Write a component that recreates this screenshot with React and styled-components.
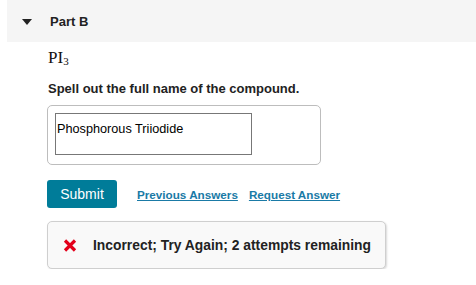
import React from 'react';
import styled, { createGlobalStyle } from 'styled-components';

const GlobalStyle = createGlobalStyle`
    body {
        margin: 0;
        background: #fff;
        font-family: "Liberation Sans", Arial, sans-serif;
    }
`

const PartHeader = styled.div`
    margin-left: 7px;
    height: 42px;
    background: #f5f5f5;
    display: flex;
    align-items: center;
    padding-left: 15px;
`

const Caret = styled.span`
    width: 0;
    height: 0;
    border-left: 5px solid transparent;
    border-right: 5px solid transparent;
    border-top: 6px solid #222;
    margin-right: 18px;
    margin-top: 1px;
`

const PartTitle = styled.span`
    font-weight: bold;
    font-size: 13px;
    color: #222;
`

const Body = styled.div`
    padding-left: 47px;
`

const Formula = styled.div`
    font-family: "Liberation Serif", "Times New Roman", serif;
    font-size: 17px;
    color: #111;
    margin-top: 6px;
    padding-left: 1px;
    line-height: 20px;

    sub {
        font-size: 11px;
        vertical-align: -2px;
    }
`

const Prompt = styled.p`
    margin: 10px 0 0 1px;
    font-weight: bold;
    font-size: 13px;
    color: #222;
    line-height: 16px;
`

const AnswerBox = styled.div`
    margin-top: 8px;
    width: 274px;
    height: 60px;
    border: 1px solid #bdbdbd;
    border-radius: 5px;
    box-sizing: border-box;
    padding: 7px 0 0 7px;
`

const AnswerInput = styled.div`
    width: 197px;
    height: 42px;
    border: 1px solid #777;
    box-sizing: border-box;
    font-size: 12.7px;
    color: #000;
    padding: 8px 0 0 1px;
`

const Actions = styled.div`
    margin-top: 15px;
    display: flex;
    align-items: center;
    gap: 11px;
`

const SubmitButton = styled.button`
    width: 70px;
    height: 28px;
    border: none;
    border-radius: 3px;
    background: #007c99;
    color: #fff;
    font-family: "Liberation Sans", Arial, sans-serif;
    font-size: 14px;
    padding: 0;
    margin-right: 9px;
`

const TextLink = styled.a`
    font-size: 11.7px;
    font-weight: bold;
    color: #1a7aa6;
    text-decoration: underline;
    cursor: pointer;
`

const Feedback = styled.div`
    margin-top: 13px;
    width: 339px;
    height: 48px;
    box-sizing: border-box;
    border: 1px solid #cfcfcf;
    border-radius: 5px;
    background: #f9f9f9;
    box-shadow: 1px 1px 2px rgba(0, 0, 0, 0.15);
    display: flex;
    align-items: center;
    padding-left: 15px;
    gap: 16px;
`

const FeedbackText = styled.span`
    font-weight: bold;
    font-size: 13.85px;
    color: #222;
`

const CrossIcon = () => (
    <svg width="14" height="13" viewBox="0 0 14 13">
        <path d="M2 1.5 L12 11.5 M12 1.5 L2 11.5" stroke="#e3001b" strokeWidth="3.2" strokeLinecap="butt" />
    </svg>
)

const App = () => {
    return (
        <>
            <GlobalStyle />
            <PartHeader>
                <Caret />
                <PartTitle>Part B</PartTitle>
            </PartHeader>
            <Body>
                <Formula>PI<sub>3</sub></Formula>
                <Prompt>Spell out the full name of the compound.</Prompt>
                <AnswerBox>
                    <AnswerInput>Phosphorous Triiodide</AnswerInput>
                </AnswerBox>
                <Actions>
                    <SubmitButton>Submit</SubmitButton>
                    <TextLink>Previous Answers</TextLink>
                    <TextLink>Request Answer</TextLink>
                </Actions>
                <Feedback>
                    <CrossIcon />
                    <FeedbackText>Incorrect; Try Again; 2 attempts remaining</FeedbackText>
                </Feedback>
            </Body>
        </>
    )
}

export default App
